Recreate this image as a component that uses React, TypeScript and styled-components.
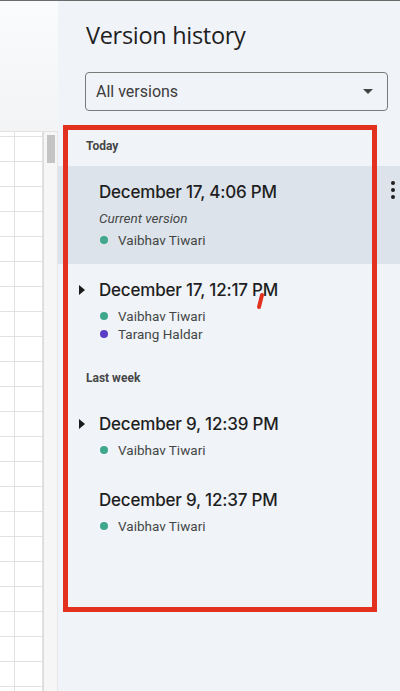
import React from 'react';
import styled, { createGlobalStyle } from 'styled-components';

const GlobalStyle = createGlobalStyle`
  html, body {
    margin: 0;
    padding: 0;
    background: #f0f3f8;
  }
  * {
    box-sizing: border-box;
  }
`;

const Screen = styled.div`
  position: relative;
  display: flex;
  width: 400px;
  height: 691px;
  overflow: hidden;
  border-top: 1px solid #6b6b6b;
  font-family: Roboto, 'Liberation Sans', sans-serif;
`;

const SheetPane = styled.div`
  display: flex;
  flex-direction: column;
  width: 58px;
  flex-shrink: 0;
  background: #f8f9fa;
`;

const SheetToolbar = styled.div`
  height: 131px;
  background: linear-gradient(#fafbfc 0, #f3f4f5 100%);
  border-bottom: 1px solid #e3e3e3;
`;

const SheetBody = styled.div`
  display: flex;
  flex: 1;
`;

const Cells = styled.div`
  flex: 1;
  background-color: #fff;
  background-image:
    linear-gradient(to right, #e2e2e2 1px, transparent 1px),
    linear-gradient(to bottom, #e2e2e2 1px, transparent 1px);
  background-size: 28px 25px;
  background-position: 14px 4px;
`;

const Scrollbar = styled.div`
  width: 15px;
  padding: 3px 2px 0 3px;
  background: #f6f6f6;
  border-left: 1px solid #dcdcdc;
  border-right: 1px solid #e6e6e6;
`;

const Thumb = styled.div`
  height: 28px;
  background: #c4c4c4;
`;

const Panel = styled.aside`
  flex: 1;
  display: flex;
  flex-direction: column;
  background: #f0f3f8;
`;

const Title = styled.h1`
  margin: 19px 0 0 28px;
  font-family: 'Open Sans', Roboto, sans-serif;
  font-size: 23.5px;
  line-height: 30px;
  font-weight: 400;
  color: #1f1f1f;
  letter-spacing: -0.3px;
`;

const Select = styled.div`
  display: flex;
  align-items: center;
  justify-content: space-between;
  height: 39px;
  margin: 22px 12px 0 27px;
  padding: 0 14px 0 10px;
  border: 1px solid #7a7a7a;
  border-radius: 4px;
  font-size: 16px;
  color: #3c3c3c;
`;

const Caret = styled.span`
  width: 0;
  height: 0;
  border-left: 5px solid transparent;
  border-right: 5px solid transparent;
  border-top: 5px solid #444;
`;

const List = styled.div`
  display: flex;
  flex-direction: column;
  margin-top: 15px;
`;

const Section = styled.div`
  height: 40px;
  display: flex;
  align-items: center;
  padding-left: 28px;
  font-size: 12px;
  font-weight: 700;
  color: #474747;
`;

const Entry = styled.div<{ $selected?: boolean }>`
  position: relative;
  padding: 16px 0 15px 41px;
  background: ${(p) => (p.$selected ? '#dde3ea' : 'transparent')};
`;

const Expand = styled.span`
  position: absolute;
  left: 21px;
  top: 21px;
  width: 0;
  height: 0;
  border-top: 5px solid transparent;
  border-bottom: 5px solid transparent;
  border-left: 6px solid #1a1a1a;
`;

const When = styled.div`
  font-family: Inter, Roboto, sans-serif;
  font-size: 17px;
  line-height: 20px;
  font-weight: 450;
  color: #1f1f1f;
  margin-bottom: 7px;
  letter-spacing: -0.2px;
`;

const Note = styled.div`
  font-size: 13.5px;
  line-height: 18px;
  font-style: italic;
  color: #444746;
  margin-bottom: 4px;
`;

const Editor = styled.div`
  display: flex;
  align-items: center;
  gap: 10px;
  font-size: 13.5px;
  line-height: 18px;
  color: #444746;
`;

const Dot = styled.span<{ $color: string }>`
  width: 8px;
  height: 8px;
  margin-left: 1px;
  border-radius: 50%;
  background: ${(p) => p.$color};
`;

const Kebab = styled.svg`
  position: absolute;
  right: 3px;
  top: 14px;
`;

const Highlight = styled.div`
  position: absolute;
  left: 63px;
  top: 124px;
  width: 314px;
  height: 487px;
  border: 5px solid #e2311f;
  pointer-events: none;
`;

const PenMark = styled.svg`
  position: absolute;
  left: 254px;
  top: 291px;
`;

const GREEN = '#3fa88c';
const PURPLE = '#5a3fc6';

type Version = {
  when: string;
  note?: string;
  editors: { name: string; color: string }[];
  selected?: boolean;
  expandable?: boolean;
};

const groups: { label: string; versions: Version[] }[] = [
  {
    label: 'Today',
    versions: [
      {
        when: 'December 17, 4:06 PM',
        note: 'Current version',
        editors: [{ name: 'Vaibhav Tiwari', color: GREEN }],
        selected: true,
      },
      {
        when: 'December 17, 12:17 PM',
        editors: [
          { name: 'Vaibhav Tiwari', color: GREEN },
          { name: 'Tarang Haldar', color: PURPLE },
        ],
        expandable: true,
      },
    ],
  },
  {
    label: 'Last week',
    versions: [
      {
        when: 'December 9, 12:39 PM',
        editors: [{ name: 'Vaibhav Tiwari', color: GREEN }],
        expandable: true,
      },
      {
        when: 'December 9, 12:37 PM',
        editors: [{ name: 'Vaibhav Tiwari', color: GREEN }],
      },
    ],
  },
];

export default function App() {
  return (
    <>
      <GlobalStyle />
      <Screen>
        <SheetPane>
          <SheetToolbar />
          <SheetBody>
            <Cells />
            <Scrollbar>
              <Thumb />
            </Scrollbar>
          </SheetBody>
        </SheetPane>

        <Panel>
          <Title>Version history</Title>
          <Select>
            <span>All versions</span>
            <Caret />
          </Select>
          <List>
            {groups.map((g) => (
              <React.Fragment key={g.label}>
                <Section>{g.label}</Section>
                {g.versions.map((v) => (
                  <Entry key={v.when} $selected={v.selected}>
                    {v.expandable && <Expand />}
                    <When>{v.when}</When>
                    {v.note && <Note>{v.note}</Note>}
                    {v.editors.map((e) => (
                      <Editor key={e.name}>
                        <Dot $color={e.color} />
                        {e.name}
                      </Editor>
                    ))}
                    {v.selected && (
                      <Kebab width="8" height="20" viewBox="0 0 8 20">
                        <circle cx="4" cy="3" r="2" fill="#1f1f1f" />
                        <circle cx="4" cy="10" r="2" fill="#1f1f1f" />
                        <circle cx="4" cy="17" r="2" fill="#1f1f1f" />
                      </Kebab>
                    )}
                  </Entry>
                ))}
              </React.Fragment>
            ))}
          </List>
        </Panel>

        <Highlight />
        <PenMark width="12" height="20" viewBox="0 0 12 20">
          <path d="M8 3 L5 15" stroke="#e2311f" strokeWidth="4" strokeLinecap="round" />
        </PenMark>
      </Screen>
    </>
  );
}
